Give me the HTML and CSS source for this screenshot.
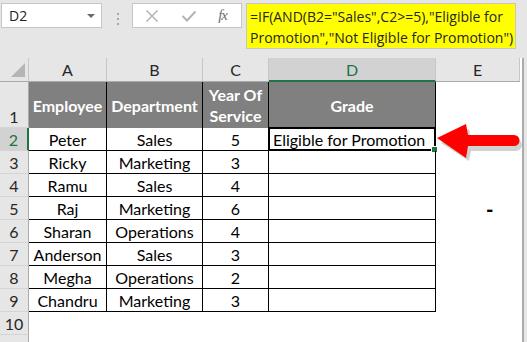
FILE: index.html
```html
<!DOCTYPE html>
<html lang="en">
<head>
    <meta charset="UTF-8">
    <meta name="viewport" content="width=device-width, initial-scale=1.0">
    <title>IF AND - Eligible for Promotion</title>
    <link rel="stylesheet" href="styles.css">
</head>
<body>

<div class="window">
    <!-- formula bar -->
    <div class="formula-bar">
        <div class="name-box">
            <span>D2</span>
            <span class="drop"></span>
        </div>
        <div class="grip"><i></i><i></i><i></i></div>
        <div class="fx-box">
            <svg width="14" height="14" viewBox="0 0 14 14"><path d="M1.5 1.5 L12.5 12.5 M12.5 1.5 L1.5 12.5" stroke="#b4b4b4" stroke-width="1.5" fill="none"/></svg>
            <svg width="16" height="14" viewBox="0 0 16 14"><path d="M1.5 7 L6 11.5 L14.5 2.5" stroke="#b4b4b4" stroke-width="2" fill="none"/></svg>
            <span class="fx">fx</span>
        </div>
        <div class="formula">=IF(AND(B2="Sales",C2&gt;=5),"Eligible for Promotion","Not Eligible for Promotion")</div>
    </div>

    <!-- sheet -->
    <div class="sheet">
        <div class="corner"><span class="tri"></span></div>
        <div class="col-head">A</div>
        <div class="col-head">B</div>
        <div class="col-head">C</div>
        <div class="col-head active">D</div>
        <div class="col-head">E</div>

        <div class="row-head">1</div>
        <div class="cell title">Employee</div>
        <div class="cell title">Department</div>
        <div class="cell title">Year Of<br>Service</div>
        <div class="cell title">Grade</div>
        <div class="cell blank"></div>

        <div class="row-head active">2</div>
        <div class="cell">Peter</div>
        <div class="cell">Sales</div>
        <div class="cell">5</div>
        <div class="cell selected">Eligible for Promotion<span class="handle"></span></div>
        <div class="cell blank"></div>

        <div class="row-head">3</div>
        <div class="cell">Ricky</div>
        <div class="cell">Marketing</div>
        <div class="cell">3</div>
        <div class="cell"></div>
        <div class="cell blank"></div>

        <div class="row-head">4</div>
        <div class="cell">Ramu</div>
        <div class="cell">Sales</div>
        <div class="cell">4</div>
        <div class="cell"></div>
        <div class="cell blank"></div>

        <div class="row-head">5</div>
        <div class="cell">Raj</div>
        <div class="cell">Marketing</div>
        <div class="cell">6</div>
        <div class="cell"></div>
        <div class="cell blank dash">-</div>

        <div class="row-head">6</div>
        <div class="cell">Sharan</div>
        <div class="cell">Operations</div>
        <div class="cell">4</div>
        <div class="cell"></div>
        <div class="cell blank"></div>

        <div class="row-head">7</div>
        <div class="cell">Anderson</div>
        <div class="cell">Sales</div>
        <div class="cell">3</div>
        <div class="cell"></div>
        <div class="cell blank"></div>

        <div class="row-head">8</div>
        <div class="cell">Megha</div>
        <div class="cell">Operations</div>
        <div class="cell">2</div>
        <div class="cell"></div>
        <div class="cell blank"></div>

        <div class="row-head">9</div>
        <div class="cell">Chandru</div>
        <div class="cell">Marketing</div>
        <div class="cell">3</div>
        <div class="cell"></div>
        <div class="cell blank"></div>

        <div class="row-head">10</div>
        <div class="cell blank"></div>
        <div class="cell blank"></div>
        <div class="cell blank"></div>
        <div class="cell blank"></div>
        <div class="cell blank"></div>

        <div class="row-head"></div>
        <div class="cell blank"></div>
        <div class="cell blank"></div>
        <div class="cell blank"></div>
        <div class="cell blank"></div>
        <div class="cell blank"></div>
    </div>

    <!-- arrow pointing at D2 -->
    <svg class="arrow" width="90" height="42" viewBox="0 0 90 42">
        <path d="M3 18 L31 4 L33 14 L78 14 A6 6 0 0 1 78 26 L33 26 L31 36 Z" fill="#9a9a9a" opacity="0.45" transform="translate(2 3)"/>
        <path d="M1 16 L30 2 L32 13 L78 13 A5.5 5.5 0 0 1 78 24 L32 24 L30 36 Z" fill="#ff0000"/>
    </svg>
</div>

</body>
</html>
```

FILE: styles.css
```css
body {
    margin: 0;
    background-color: #fff;
    font-family: Lato, 'Open Sans', sans-serif;
}

.window {
    position: relative;
    width: 527px;
    height: 342px;
    overflow: hidden;
    background-color: #e6e6e6;
}

/* ---------- formula bar ---------- */

.formula-bar {
    display: flex;
    align-items: flex-start;
    height: 58px;
    padding-top: 3px;
    box-sizing: border-box;
}

.name-box {
    display: flex;
    align-items: center;
    justify-content: space-between;
    width: 101px;
    height: 25px;
    margin-left: 1px;
    padding: 0 6px 0 7px;
    box-sizing: border-box;
    background-color: #fff;
    border: 1px solid #c6c6c6;
    font-family: 'Open Sans', sans-serif;
    font-size: 14px;
    color: #222;
}

.drop {
    width: 0;
    height: 0;
    border-left: 4px solid transparent;
    border-right: 4px solid transparent;
    border-top: 4px solid #6b6b6b;
}

.grip {
    display: flex;
    flex-direction: column;
    gap: 3px;
    margin: 10px 13px 0 15px;
}

.grip i {
    display: block;
    width: 2px;
    height: 2px;
    background-color: #a8a8a8;
}

.fx-box {
    display: flex;
    align-items: center;
    justify-content: space-between;
    width: 110px;
    height: 25px;
    padding: 0 14px 0 12px;
    box-sizing: border-box;
    background-color: #fff;
    border: 1px solid #c6c6c6;
}

.fx {
    font-family: 'Liberation Serif', serif;
    font-style: italic;
    font-size: 15px;
    color: #6d6d6d;
    letter-spacing: -1px;
}

.formula {
    width: 270px;
    height: 46px;
    margin-left: 4px;
    padding: 2px 0 0 3px;
    box-sizing: border-box;
    background-color: #ffff00;
    border: 1px solid #c6c6c6;
    font-family: 'Open Sans', sans-serif;
    font-size: 14px;
    line-height: 21px;
    color: #262626;
}

/* ---------- sheet ---------- */

.sheet {
    display: grid;
    grid-template-columns: 29px 78px 96px 66px 167px 84px;
    grid-template-rows: 24px 46px repeat(9, 23px) 23px;
    width: 522px;
    border-right: 2px solid #ababab;
    background-color: #fff;
    font-size: 16px;
    color: #000;
}

.corner, .col-head, .row-head {
    background-color: #e6e6e6;
    color: #262626;
    box-sizing: border-box;
}

.corner {
    position: relative;
    border-right: 1px solid #c6c6c6;
    border-bottom: 1px solid #ababab;
}

.tri {
    position: absolute;
    right: 3px;
    bottom: 4px;
    width: 0;
    height: 0;
    border-left: 14px solid transparent;
    border-bottom: 14px solid #b5b5b5;
}

.col-head {
    display: flex;
    align-items: center;
    justify-content: center;
    border-right: 1px solid #c6c6c6;
    border-bottom: 1px solid #ababab;
}

.col-head.active {
    background-color: #d2d2d2;
    color: #217346;
    border-bottom: 2px solid #217346;
}

.row-head {
    display: flex;
    align-items: flex-end;
    justify-content: center;
    padding-bottom: 1px;
    border-right: 1px solid #ababab;
    border-bottom: 1px solid #d4d4d4;
}

.row-head.active {
    background-color: #d2d2d2;
    color: #217346;
    border-right: 2px solid #217346;
}

.cell {
    position: relative;
    display: flex;
    align-items: center;
    justify-content: center;
    box-sizing: border-box;
    border-right: 1px solid #000;
    border-bottom: 1px solid #000;
    white-space: nowrap;
}

.cell.title {
    background-color: #808080;
    color: #fff;
    font-weight: bold;
    text-align: center;
    line-height: 21px;
    border-bottom: none;
}

.cell.blank {
    border: none;
}

.cell.dash {
    justify-content: flex-start;
    padding-left: 50px;
    font-size: 20px;
    font-weight: 900;
}

.cell.selected {
    justify-content: flex-start;
    padding-left: 3px;
    border: 2px solid #000;
    margin: -1px 0 0 -1px;
}

.handle {
    position: absolute;
    right: -4px;
    bottom: -4px;
    width: 5px;
    height: 5px;
    background-color: #217346;
    border: 1px solid #fff;
}

.arrow {
    position: absolute;
    left: 436px;
    top: 122px;
}
```
